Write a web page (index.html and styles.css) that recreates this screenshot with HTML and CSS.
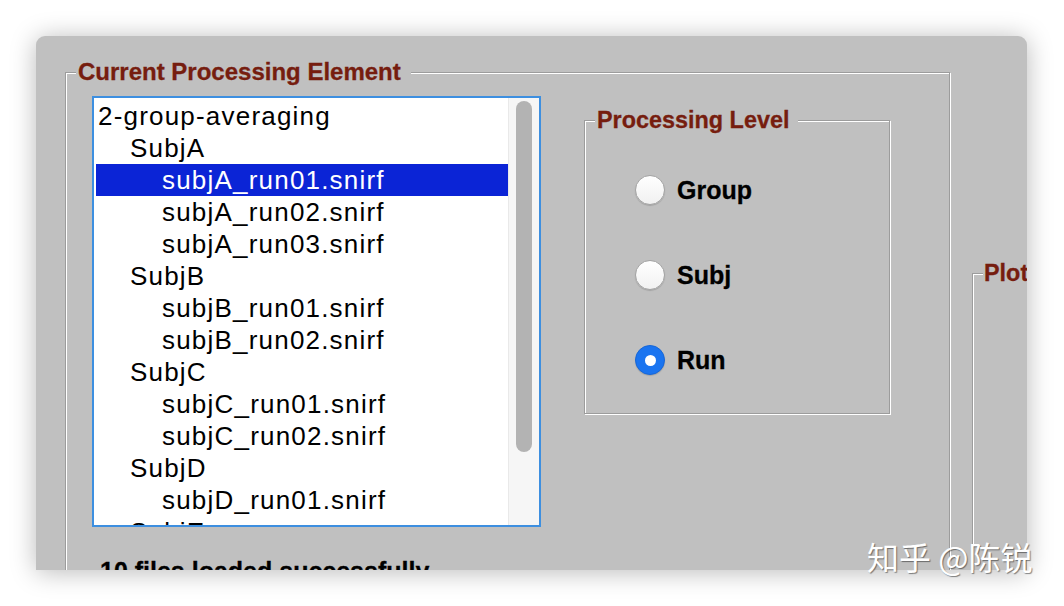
FILE: index.html
```html
<!DOCTYPE html>
<html>
<head>
  <title>Processing Element</title>
  <link rel="stylesheet" href="styles.css">
</head>
<body>

  <div class="window">
    <fieldset class="group main">
      <legend>Current Processing Element</legend>
      <div class="row">
        <div class="listbox">
          <div class="items">
            <div class="item">2-group-averaging</div>
            <div class="item lvl1">SubjA</div>
            <div class="item lvl2 selected">subjA_run01.snirf</div>
            <div class="item lvl2">subjA_run02.snirf</div>
            <div class="item lvl2">subjA_run03.snirf</div>
            <div class="item lvl1">SubjB</div>
            <div class="item lvl2">subjB_run01.snirf</div>
            <div class="item lvl2">subjB_run02.snirf</div>
            <div class="item lvl1">SubjC</div>
            <div class="item lvl2">subjC_run01.snirf</div>
            <div class="item lvl2">subjC_run02.snirf</div>
            <div class="item lvl1">SubjD</div>
            <div class="item lvl2">subjD_run01.snirf</div>
            <div class="item lvl1">SubjE</div>
            <div class="item lvl2">subjE_run01.snirf</div>
          </div>
          <div class="scroll"><div class="thumb"></div></div>
        </div>

        <fieldset class="group level">
          <legend>Processing Level</legend>
          <div class="option"><span class="dot"></span>Group</div>
          <div class="option"><span class="dot"></span>Subj</div>
          <div class="option"><span class="dot on"></span>Run</div>
        </fieldset>
      </div>
      <div class="status">10 files loaded successfully</div>
    </fieldset>

    <fieldset class="group plot">
      <legend>Plot</legend>
    </fieldset>
  </div>

  <div class="watermark">知乎 @陈锐</div>

</body>
</html>
```

FILE: styles.css
```css
body {
  margin: 0;
  height: 606px;
  overflow: hidden;
  position: relative;
  background: #fff;
  font-family: "Liberation Sans", Arial, sans-serif;
}
.window {
  margin: 36px 0 0 36px;
  width: 991px;
  height: 534px;
  box-sizing: border-box;
  padding: 24px 0 0 29px;
  display: flex;
  align-items: flex-start;
  background: #c0c0c0;
  border-radius: 9px 9px 0 0;
  box-shadow: 0 2px 26px rgba(0, 0, 0, 0.28);
  overflow: hidden;
}

/* etched group boxes */
.group {
  margin: 0;
  min-width: 0;
  border: 1px solid #9c9c9c;
  box-shadow: inset 1px 1px 0 #fff, 1px 1px 0 #fff;
}
.group legend {
  font-size: 24px;
  line-height: 24px;
  font-weight: bold;
  color: #761d0f;
  -webkit-text-stroke: 0.3px #761d0f;
  background: #c0c0c0;
}
.main {
  flex: none;
  width: 885px;
  height: 620px;
  box-sizing: border-box;
  padding: 12px 0 0 26px;
}
.main legend {
  margin-left: -16px;
  padding: 0 10px 0 2px;
}
.row {
  display: flex;
  align-items: flex-start;
}

/* list box */
.listbox {
  width: 449px;
  height: 431px;
  box-sizing: border-box;
  border: 2px solid #3d8fe0;
  background: #fff;
  display: flex;
}
.items {
  flex: 1;
  overflow: hidden;
  padding: 2px 0 0 2px;
}
.item {
  height: 32px;
  line-height: 32px;
  padding-left: 2px;
  font-size: 26px;
  letter-spacing: 1.2px;
  white-space: nowrap;
  color: #000;
}
.item.lvl1 {
  padding-left: 34px;
}
.item.lvl2 {
  padding-left: 66px;
}
.item.selected {
  background: #0b24d6;
  color: #fff;
}
.scroll {
  width: 31px;
  box-sizing: border-box;
  padding: 3px 0 0 7px;
  background: #f6f6f6;
  border-left: 1px solid #e9e9e9;
}
.thumb {
  width: 16px;
  height: 351px;
  border-radius: 8px;
  background: #b3b3b3;
}

/* processing level */
.level {
  margin: 12px 0 0 43px;
  width: 306px;
  box-sizing: border-box;
  padding: 42px 0 37px 50px;
}
.level legend {
  margin-left: -40px;
  padding: 0 9px 0 2px;
  font-size: 23.4px;
}
.option {
  height: 32px;
  display: flex;
  align-items: center;
  gap: 12px;
  font-size: 25px;
  font-weight: bold;
  color: #000;
  -webkit-text-stroke: 0.3px #000;
}
.option + .option {
  margin-top: 53px;
}
.dot {
  width: 30px;
  height: 30px;
  box-sizing: border-box;
  border-radius: 50%;
  border: 1px solid #a4a4a4;
  background: linear-gradient(#fff, #f1f1f1);
  box-shadow: 0 1px 1px rgba(0, 0, 0, 0.15);
}
.dot.on {
  display: flex;
  align-items: center;
  justify-content: center;
  border-color: #1767d8;
  background: #1a74f0;
}
.dot.on::after {
  content: "";
  width: 11px;
  height: 11px;
  border-radius: 50%;
  background: #fff;
}

.status {
  margin: 30px 0 0 8px;
  font-size: 25px;
  line-height: 28px;
  font-weight: bold;
  color: #000;
  -webkit-text-stroke: 0.3px #000;
}

.plot {
  flex: none;
  margin: 201px 0 0 22px;
  width: 200px;
  height: 400px;
  padding: 0 0 0 10px;
}
.plot legend {
  padding: 0 0 0 1px;
  font-size: 23.4px;
}

.watermark {
  position: absolute;
  left: 867px;
  top: 536px;
  font-family: "Noto Sans CJK SC", sans-serif;
  font-size: 32px;
  line-height: 40px;
  color: #fff;
  text-shadow: 1px 1px 1px rgba(0, 0, 0, 0.45);
}
```
